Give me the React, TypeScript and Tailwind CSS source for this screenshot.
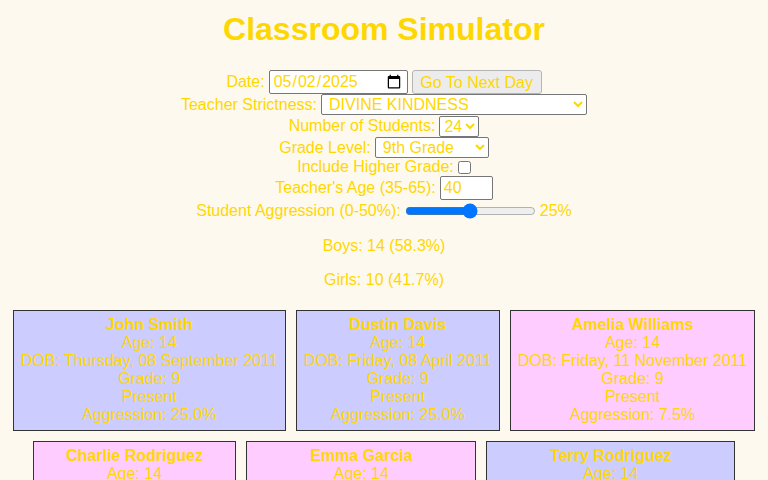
import { useState } from 'react';

type Student = {
  name: string;
  age: number;
  dob: string;
  grade: number;
  present: boolean;
  aggression: string;
  gender: 'boy' | 'girl';
};

const students: Student[] = [
  { name: 'John Smith', age: 14, dob: 'Thursday, 08 September 2011', grade: 9, present: true, aggression: '25.0%', gender: 'boy' },
  { name: 'Dustin Davis', age: 14, dob: 'Friday, 08 April 2011', grade: 9, present: true, aggression: '25.0%', gender: 'boy' },
  { name: 'Amelia Williams', age: 14, dob: 'Friday, 11 November 2011', grade: 9, present: true, aggression: '7.5%', gender: 'girl' },
  { name: 'Charlie Rodriguez', age: 14, dob: 'Friday, 22 April 2011', grade: 9, present: true, aggression: '7.5%', gender: 'girl' },
  { name: 'Emma Garcia', age: 14, dob: 'Monday, 19 March 2011', grade: 9, present: true, aggression: '7.5%', gender: 'girl' },
  { name: 'Terry Rodriguez', age: 14, dob: 'Saturday, 16 October 2011', grade: 9, present: true, aggression: '25.0%', gender: 'boy' },
  { name: 'Michael Brown', age: 14, dob: 'Sunday, 12 June 2011', grade: 9, present: true, aggression: '25.0%', gender: 'boy' },
  { name: 'Olivia Jones', age: 14, dob: 'Tuesday, 03 May 2011', grade: 9, present: true, aggression: '7.5%', gender: 'girl' },
  { name: 'James Miller', age: 14, dob: 'Wednesday, 20 July 2011', grade: 9, present: true, aggression: '25.0%', gender: 'boy' },
  { name: 'Sophia Martinez', age: 14, dob: 'Monday, 14 February 2011', grade: 9, present: true, aggression: '7.5%', gender: 'girl' },
  { name: 'David Wilson', age: 14, dob: 'Thursday, 25 August 2011', grade: 9, present: true, aggression: '25.0%', gender: 'boy' },
  { name: 'Robert Anderson', age: 14, dob: 'Saturday, 01 January 2011', grade: 9, present: true, aggression: '25.0%', gender: 'boy' },
  { name: 'Ava Thomas', age: 14, dob: 'Friday, 10 June 2011', grade: 9, present: true, aggression: '7.5%', gender: 'girl' },
  { name: 'William Taylor', age: 14, dob: 'Tuesday, 15 March 2011', grade: 9, present: true, aggression: '25.0%', gender: 'boy' },
  { name: 'Daniel Moore', age: 14, dob: 'Sunday, 04 December 2011', grade: 9, present: true, aggression: '25.0%', gender: 'boy' },
  { name: 'Isabella Jackson', age: 14, dob: 'Monday, 17 October 2011', grade: 9, present: true, aggression: '7.5%', gender: 'girl' },
  { name: 'Joseph Martin', age: 14, dob: 'Wednesday, 27 April 2011', grade: 9, present: true, aggression: '25.0%', gender: 'boy' },
  { name: 'Mia Lee', age: 14, dob: 'Thursday, 19 May 2011', grade: 9, present: true, aggression: '7.5%', gender: 'girl' },
  { name: 'Thomas Harris', age: 14, dob: 'Saturday, 09 July 2011', grade: 9, present: true, aggression: '25.0%', gender: 'boy' },
  { name: 'Charles Clark', age: 14, dob: 'Friday, 02 September 2011', grade: 9, present: true, aggression: '25.0%', gender: 'boy' },
  { name: 'Emily Lewis', age: 14, dob: 'Tuesday, 22 February 2011', grade: 9, present: true, aggression: '7.5%', gender: 'girl' },
  { name: 'Andrew Walker', age: 14, dob: 'Monday, 21 November 2011', grade: 9, present: true, aggression: '25.0%', gender: 'boy' },
  { name: 'Kevin Hall', age: 14, dob: 'Sunday, 30 January 2011', grade: 9, present: true, aggression: '25.0%', gender: 'boy' },
  { name: 'Brian Young', age: 14, dob: 'Wednesday, 05 October 2011', grade: 9, present: true, aggression: '25.0%', gender: 'boy' },
];

function StudentCard({ s }: { s: Student }) {
  return (
    <div
      className={`m-[5px] border border-[#333] px-[7px] pt-[5px] pb-[6px] text-center leading-[normal] ${
        s.gender === 'boy' ? 'bg-[#ccccff]' : 'bg-[#ffccff]'
      }`}
    >
      <div className="font-bold">{s.name}</div>
      <div>Age: {s.age}</div>
      <div>DOB: {s.dob}</div>
      <div>Grade: {s.grade}</div>
      <div>{s.present ? 'Present' : 'Absent'}</div>
      <div>Aggression: {s.aggression}</div>
    </div>
  );
}

export default function App() {
  const [aggression, setAggression] = useState(25);

  return (
    <div className="min-h-screen bg-[#fef9ef] font-['Liberation_Sans',Arial,sans-serif] text-[16px] text-[#ffd700]">
      <h1 className="pt-[11px] pb-[22px] text-center text-[32px] font-bold leading-[normal]">Classroom Simulator</h1>

      <div className="flex h-[24px] items-center justify-center gap-[4px]">
        <span>Date:</span>
        <input
          type="date"
          defaultValue="2025-05-02"
          className="h-[24px] w-[139px] rounded-[2px] border border-[#767676] bg-white px-[3px]"
        />
        <button className="h-[24px] w-[130px] rounded-[3px] border border-[#b5b5b5] bg-[#ececec]">Go To Next Day</button>
      </div>

      <div className="flex h-[21px] items-center justify-center gap-[4px]">
        <span>Teacher Strictness:</span>
        <select className="h-[21px] w-[266px] rounded-[2px] border border-[#767676] bg-white pl-[3px]" defaultValue="divine">
          <option value="divine">DIVINE KINDNESS</option>
          <option value="lenient">Lenient</option>
          <option value="normal">Normal</option>
          <option value="strict">Strict</option>
        </select>
      </div>

      <div className="flex h-[22px] items-center justify-center gap-[4px]">
        <span>Number of Students:</span>
        <select className="h-[21px] w-[40px] rounded-[2px] border border-[#767676] bg-white" defaultValue="24">
          <option>20</option>
          <option>24</option>
          <option>28</option>
          <option>32</option>
        </select>
      </div>

      <div className="flex h-[21px] items-center justify-center gap-[4px]">
        <span>Grade Level:</span>
        <select className="h-[21px] w-[114px] rounded-[2px] border border-[#767676] bg-white pl-[3px]" defaultValue="9">
          <option value="9">9th Grade</option>
          <option value="10">10th Grade</option>
          <option value="11">11th Grade</option>
          <option value="12">12th Grade</option>
        </select>
      </div>

      <div className="flex h-[18px] items-center justify-center gap-[4px]">
        <span>Include Higher Grade:</span>
        <input type="checkbox" className="h-[13px] w-[13px]" />
      </div>

      <div className="flex h-[24px] items-center justify-center gap-[4px]">
        <span>Teacher's Age (35-65):</span>
        <input
          type="number"
          defaultValue={40}
          className="h-[24px] w-[53px] rounded-[2px] border border-[#767676] bg-white px-[3px] [appearance:textfield]"
        />
      </div>

      <div className="flex h-[21px] items-center justify-center gap-[4px]">
        <span>Student Aggression (0-50%):</span>
        <input
          type="range"
          min={0}
          max={50}
          value={aggression}
          onChange={(e) => setAggression(Number(e.target.value))}
          className="w-[131px]"
        />
        <span>{aggression}%</span>
      </div>

      <p className="my-[16px] text-center leading-[normal]">Boys: 14 (58.3%)</p>
      <p className="my-[16px] text-center leading-[normal]">Girls: 10 (41.7%)</p>

      <div className="flex flex-wrap justify-center">
        {students.map((s) => (
          <StudentCard key={s.name} s={s} />
        ))}
      </div>
    </div>
  );
}
